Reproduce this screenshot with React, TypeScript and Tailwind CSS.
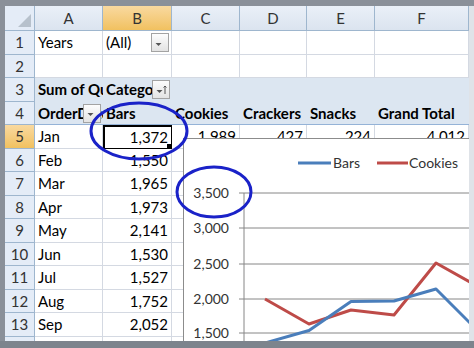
import React from "react"

const cols = ["A", "B", "C", "D", "E", "F"]
const colW = ["w-[68px]", "w-[69px]", "w-[68px]", "w-[67px]", "w-[68px]", "w-[94px]"]

const months: [string, string][] = [
  ["Jan", "1,372"],
  ["Feb", "1,550"],
  ["Mar", "1,965"],
  ["Apr", "1,973"],
  ["May", "2,141"],
  ["Jun", "1,530"],
  ["Jul", "1,527"],
  ["Aug", "1,752"],
  ["Sep", "2,052"],
  ["Oct", "1,819"],
]

function DropBtn({ sort = false }: { sort?: boolean }) {
  return (
    <div className="absolute right-[2px] top-[2px] flex h-[19px] w-[18px] items-center justify-center border border-[#a3a3a3] bg-gradient-to-b from-[#fdfdfd] to-[#e3e3e3]">
      <svg width="14" height="14" viewBox="0 0 14 14">
        <path d="M2.5 7 L8.5 7 L5.5 10 Z" fill="#555" />
        {sort && <path d="M11 11 V3 M9.5 4.5 L11 3 L12.5 4.5" stroke="#555" strokeWidth="1" fill="none" />}
      </svg>
    </div>
  )
}

function Cell({
  w,
  children,
  right = false,
  bold = false,
  blue = false,
  className = "",
}: {
  w: string
  children?: React.ReactNode
  right?: boolean
  bold?: boolean
  blue?: boolean
  className?: string
}) {
  return (
    <div
      className={`relative flex h-full shrink-0 items-center overflow-hidden whitespace-nowrap border-r border-b border-[#d4d9e2] px-[3px] ${w} ${
        right ? "justify-end" : ""
      } ${bold ? "font-bold" : ""} ${blue ? "bg-[#dce6f1]" : "bg-white"} ${className}`}
    >
      {children}
    </div>
  )
}

function RowHead({ n, active = false }: { n: number; active?: boolean }) {
  return (
    <div
      className={`flex h-full w-[30px] shrink-0 items-center justify-center border-r border-b border-[#9eb6ce] text-[#333] ${
        active ? "bg-gradient-to-b from-[#f9d99f] to-[#f1c15f]" : "bg-[#e4ecf7]"
      }`}
    >
      {n}
    </div>
  )
}

function Chart() {
  const xs = [81, 125, 167, 210, 252, 295]
  const blue = [204, 191.5, 162.5, 162, 150, 193]
  const red = [160, 185, 171, 176, 124, 148]
  const ticks = [
    { y: 54, t: "3,500" },
    { y: 89, t: "3,000" },
    { y: 125, t: "2,500" },
    { y: 160, t: "2,000" },
    { y: 194, t: "1,500" },
  ]
  const pts = (ys: number[]) => xs.map((x, i) => `${x},${ys[i]}`).join(" ")
  return (
    <div className="absolute left-[178px] top-[132px] h-[230px] w-[300px] border-l border-t border-[#8c8c8c] bg-white">
      <svg width="300" height="230" className="block" style={{ fontFamily: "Lato, sans-serif" }}>
        <line x1="114" y1="24" x2="147" y2="24" stroke="#4a7ebb" strokeWidth="3" />
        <text x="149" y="29" fontSize="14" fill="#333">Bars</text>
        <line x1="193" y1="24" x2="224" y2="24" stroke="#be4b48" strokeWidth="3" />
        <text x="225" y="29" fontSize="14" fill="#333">Cookies</text>
        {ticks.map((k) => (
          <g key={k.t}>
            <line x1="55" y1={k.y} x2="300" y2={k.y} stroke="#868686" strokeWidth="1" />
            <text x="45" y={k.y + 5} fontSize="14" fill="#333" textAnchor="end">
              {k.t}
            </text>
          </g>
        ))}
        <line x1="60" y1="54" x2="60" y2="230" stroke="#868686" strokeWidth="1" />
        <polyline points={pts(red)} fill="none" stroke="#be4b48" strokeWidth="3" strokeLinejoin="round" />
        <polyline points={pts(blue)} fill="none" stroke="#4a7ebb" strokeWidth="3" strokeLinejoin="round" />
      </svg>
    </div>
  )
}

export default function App() {
  return (
    <div
      className="relative flex h-[348px] w-[474px] flex-col overflow-hidden bg-[#8a9099] text-[15px] text-black"
      style={{ fontFamily: "Lato, sans-serif" }}
    >
      <div className="h-[6px] shrink-0" />
      <div className="flex h-[335px] shrink-0">
        <div className="w-[5px] shrink-0" />
        <div className="relative w-[464px] shrink-0 overflow-hidden bg-white">
          {/* column headers */}
          <div className="flex h-[25px]">
            <div className="relative h-full w-[30px] shrink-0 border-r border-b border-[#9eb6ce] bg-[#e4ecf7]">
              <div className="absolute bottom-[3px] right-[3px] h-0 w-0 border-b-[13px] border-l-[13px] border-b-[#b7c1cc] border-l-transparent" />
            </div>
            {cols.map((c, i) => (
              <div
                key={c}
                className={`flex h-full shrink-0 items-center justify-center border-r border-b border-[#9eb6ce] text-[#333] ${colW[i]} ${
                  c === "B" ? "bg-gradient-to-b from-[#f9d99f] to-[#f1c15f]" : "bg-gradient-to-b from-[#eaf0f8] to-[#dbe4ef]"
                }`}
              >
                {c}
              </div>
            ))}
          </div>

          {/* row 1 */}
          <div className="flex h-[23.5px]">
            <RowHead n={1} />
            <Cell w={colW[0]}>Years</Cell>
            <Cell w={colW[1]}>
              (All)
              <DropBtn />
            </Cell>
            {colW.slice(2).map((w, i) => (
              <Cell key={i} w={w} />
            ))}
          </div>

          {/* row 2 */}
          <div className="flex h-[23.5px]">
            <RowHead n={2} />
            {colW.map((w, i) => (
              <Cell key={i} w={w} />
            ))}
          </div>

          {/* row 3 */}
          <div className="flex h-[23.5px]">
            <RowHead n={3} />
            <Cell w={colW[0]} bold blue className="border-r-0 border-b-[#dce6f1]">
              Sum of Quantity
            </Cell>
            <Cell w={colW[1]} bold blue className="border-r-0 border-b-[#dce6f1]">
              Category
              <DropBtn sort />
            </Cell>
            {colW.slice(2).map((w, i) => (
              <Cell key={i} w={w} blue className="border-r-0 border-b-[#dce6f1]" />
            ))}
          </div>

          {/* row 4 */}
          <div className="flex h-[23.5px]">
            <RowHead n={4} />
            <Cell w={colW[0]} bold blue className="border-r-0 border-b-[#95b3d7]">
              OrderDate
              <DropBtn />
            </Cell>
            {["Bars", "Cookies", "Crackers", "Snacks", "Grand Total"].map((t, i) => (
              <Cell key={t} w={colW[i + 1]} bold blue className="border-r-0 border-b-[#95b3d7]">
                {t}
              </Cell>
            ))}
          </div>

          {/* data rows */}
          {months.map(([m, v], r) => (
            <div key={m} className="flex h-[23.5px]">
              <RowHead n={r + 5} active={r === 0} />
              <Cell w={colW[0]}>{m}</Cell>
              <Cell w={colW[1]} right className={r === 0 ? "border-2 border-black" : ""}>
                {v}
                {r === 0 && <div className="absolute bottom-[-1px] right-[-1px] h-[6px] w-[6px] border border-white bg-black" />}
              </Cell>
              {r === 0
                ? ["1,989", "427", "224", "4,012"].map((t, i) => (
                    <Cell key={i} w={colW[i + 2]} right>
                      {t}
                    </Cell>
                  ))
                : colW.slice(2).map((w, i) => <Cell key={i} w={w} />)}
            </div>
          ))}

          <Chart />
        </div>
        <div className="w-[5px] shrink-0 bg-[#dfe3e8]" />
      </div>
      <div className="h-[7px] shrink-0 bg-[#7d848d]" />

      {/* annotation circles */}
      <svg className="pointer-events-none absolute left-0 top-0" width="474" height="348">
        <ellipse cx="139" cy="131" rx="48" ry="28" fill="none" stroke="#1a22c8" strokeWidth="3" />
        <ellipse cx="214" cy="192" rx="37" ry="25" fill="none" stroke="#1a22c8" strokeWidth="3" />
      </svg>
    </div>
  )
}
